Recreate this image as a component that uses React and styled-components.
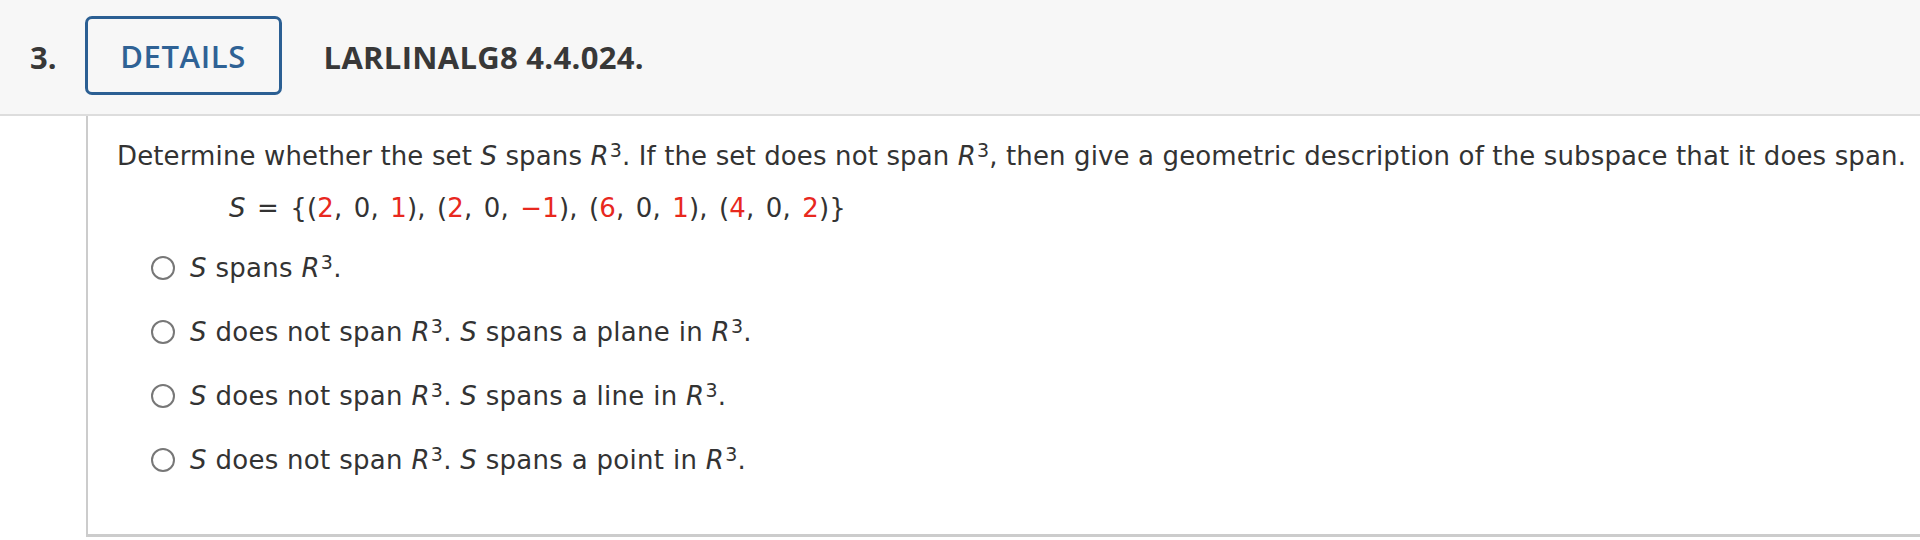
import React from "react";
import styled, { createGlobalStyle } from "styled-components";

const GlobalStyle = createGlobalStyle`
  html, body { margin: 0; padding: 0; background: #ffffff; }
  body { font-family: "DejaVu Sans", Verdana, sans-serif; color: #333333; }
`;

const Page = styled.div`
  width: 1920px;
  height: 540px;
  overflow: hidden;
  background: #ffffff;
`;

const Header = styled.header`
  display: flex;
  align-items: center;
  height: 114px;
  padding-left: 30px;
  background: #f7f7f7;
  border-bottom: 2px solid #dddddd;
  font-family: "Open Sans", "Lato", sans-serif;
`;

const Number = styled.span`
  font-size: 31px;
  font-weight: 700;
  color: #383838;
  margin-right: 28px;
`;

const DetailsButton = styled.button`
  box-sizing: border-box;
  width: 197px;
  height: 79px;
  margin-top: -3px;
  margin-right: 42px;
  border: 3px solid #2b5f93;
  border-radius: 7px;
  background: transparent;
  color: #2f6295;
  font-family: "Open Sans", "Lato", sans-serif;
  font-size: 31px;
  font-weight: 600;
  letter-spacing: 0.6px;
  padding: 0;
`;

const Title = styled.span`
  font-size: 31px;
  font-weight: 700;
  letter-spacing: 0.3px;
  color: #383838;
`;

const Content = styled.section`
  box-sizing: border-box;
  height: 421px;
  margin-left: 86px;
  padding: 22px 0 0 29px;
  border-left: 2px solid #cccccc;
  border-bottom: 3px solid #cccccc;
  font-size: 26px;
  letter-spacing: 0.13px;
`;

const Prompt = styled.p`
  margin: 0;
  line-height: 36px;
  white-space: nowrap;
`;

const MathLine = styled.p`
  margin: 16px 0 10px 112px;
  line-height: 36px;
  white-space: nowrap;
  word-spacing: 3px;
`;

const Var = styled.i`
  font-style: italic;
`;

const Sup = styled.sup`
  font-size: 19px;
  line-height: 0;
  vertical-align: 8px;
  margin-left: 1px;
`;

const Red = styled.span`
  color: #e8281e;
`;

const Options = styled.div`
  display: flex;
  flex-direction: column;
  padding-left: 34px;
`;

const Option = styled.label`
  display: flex;
  align-items: center;
  height: 64px;
  line-height: 64px;
  white-space: nowrap;
  letter-spacing: 0.3px;
`;

const Radio = styled.span`
  box-sizing: border-box;
  width: 24px;
  height: 24px;
  margin-right: 15px;
  border: 2px solid #777777;
  border-radius: 50%;
  background: #ffffff;
  flex: none;
`;

const R3 = () => (
  <>
    <Var>R</Var>
    <Sup>3</Sup>
  </>
);

const vectors = [
  ["2", "0", "1"],
  ["2", "0", "\u22121"],
  ["6", "0", "1"],
  ["4", "0", "2"],
];

const options = [
  <>
    <Var>S</Var> spans <R3 />.
  </>,
  <>
    <Var>S</Var> does not span <R3 />. <Var>S</Var> spans a plane in <R3 />.
  </>,
  <>
    <Var>S</Var> does not span <R3 />. <Var>S</Var> spans a line in <R3 />.
  </>,
  <>
    <Var>S</Var> does not span <R3 />. <Var>S</Var> spans a point in <R3 />.
  </>,
];

export default function App() {
  return (
    <Page>
      <GlobalStyle />
      <Header>
        <Number>3.</Number>
        <DetailsButton>DETAILS</DetailsButton>
        <Title>LARLINALG8 4.4.024.</Title>
      </Header>
      <Content>
        <Prompt>
          Determine whether the set <Var>S</Var> spans <R3 />. If the set does not span <R3 />, then give a
          geometric description of the subspace that it does span.
        </Prompt>
        <MathLine>
          <Var>S</Var> = {"{"}
          {vectors.map((v, i) => (
            <React.Fragment key={i}>
              (<Red>{v[0]}</Red>, {v[1]}, <Red>{v[2]}</Red>){i < vectors.length - 1 ? ", " : ""}
            </React.Fragment>
          ))}
          {"}"}
        </MathLine>
        <Options>
          {options.map((o, i) => (
            <Option key={i}>
              <Radio />
              <span>{o}</span>
            </Option>
          ))}
        </Options>
      </Content>
    </Page>
  );
}
